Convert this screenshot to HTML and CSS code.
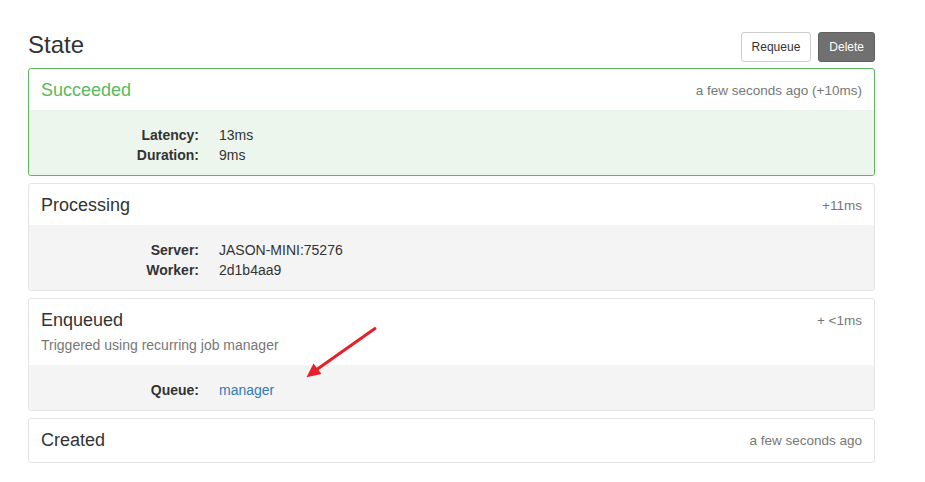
FILE: index.html
```html
<!DOCTYPE html>
<html>
<head>
<meta charset="utf-8">
<link rel="stylesheet" href="styles.css">
</head>
<body>
<div class="page">
  <div class="header-row">
    <h1 class="page-title">State</h1>
    <div class="actions">
      <button class="btn btn-default">Requeue</button>
      <button class="btn btn-death">Delete</button>
    </div>
  </div>

  <div class="state-card state-card-succeeded">
    <div class="state-card-title">
      <span class="title-text">Succeeded</span>
      <span class="state-time">a few seconds ago (+10ms)</span>
    </div>
    <div class="state-card-body">
      <dl class="dl-horizontal">
        <dt>Latency:</dt><dd>13ms</dd>
        <dt>Duration:</dt><dd>9ms</dd>
      </dl>
    </div>
  </div>

  <div class="state-card">
    <div class="state-card-title">
      <span class="title-text">Processing</span>
      <span class="state-time">+11ms</span>
    </div>
    <div class="state-card-body">
      <dl class="dl-horizontal">
        <dt>Server:</dt><dd>JASON-MINI:75276</dd>
        <dt>Worker:</dt><dd>2d1b4aa9</dd>
      </dl>
    </div>
  </div>

  <div class="state-card">
    <div class="state-card-title">
      <span class="title-text">Enqueued</span>
      <span class="state-time">+ &lt;1ms</span>
    </div>
    <p class="state-card-text">Triggered using recurring job manager</p>
    <div class="state-card-body">
      <dl class="dl-horizontal">
        <dt>Queue:</dt><dd><a class="queue-link" href="#">manager</a></dd>
      </dl>
    </div>
  </div>

  <div class="state-card">
    <div class="state-card-title">
      <span class="title-text">Created</span>
      <span class="state-time">a few seconds ago</span>
    </div>
  </div>

  <svg class="annotation-arrow" width="925" height="482" viewBox="0 0 925 482">
    <line x1="375" y1="328.5" x2="315" y2="370.8" stroke="#e8202a" stroke-width="3" stroke-linecap="round"/>
    <polygon points="306.5,377.3 313.5,363.5 321.5,374" fill="#e8202a"/>
  </svg>
</div>
</body>
</html>
```

FILE: styles.css
```css
html, body {
  margin: 0;
  padding: 0;
  background: #ffffff;
}

body {
  font-family: "Liberation Sans", Arial, Helvetica, sans-serif;
  font-size: 14px;
  line-height: 1.42857;
  color: #333333;
}

.page {
  position: relative;
  width: 847px;
  padding: 31px 0 20px 28px;
}

.header-row {
  display: flex;
  justify-content: space-between;
  align-items: flex-start;
  height: 31px;
  margin-bottom: 6px;
}

.page-title {
  margin: 1px 0 0 0;
  font-size: 24px;
  font-weight: 400;
  line-height: 1.1;
  color: #333333;
}

.actions {
  display: flex;
  gap: 7px;
  margin-top: 1px;
}

.btn {
  font-family: "Liberation Sans", Arial, Helvetica, sans-serif;
  font-size: 12px;
  line-height: 1.5;
  padding: 5px 10px;
  height: 30px;
  border-radius: 3px;
  border: 1px solid #cccccc;
  background: #ffffff;
  color: #333333;
  cursor: pointer;
}

.btn-death {
  background: #707070;
  border-color: #606060;
  color: #ffffff;
}

.state-card {
  display: block;
  margin-bottom: 7px;
  padding: 12px;
  background-color: #ffffff;
  border: 1px solid #e5e5e5;
  border-radius: 3px;
}

.state-card-succeeded {
  border-color: #5cb85c;
}

.state-card-title {
  display: flex;
  justify-content: space-between;
  align-items: baseline;
  height: 19px;
  line-height: 19px;
}

.title-text {
  font-size: 18px;
  line-height: 19px;
  font-weight: 400;
  color: #333333;
}

.state-card-succeeded .title-text {
  color: #5cb85c;
}

.state-time {
  position: relative;
  top: -1px;
  font-size: 13.5px;
  line-height: 19px;
  color: #777777;
}

.state-card-text {
  margin: 6px 0 -1px 0;
  color: #777777;
}

.state-card-body {
  padding: 10px 10px 9px 10px;
  margin: 10px -12px -12px -12px;
  border-bottom-left-radius: 3px;
  border-bottom-right-radius: 3px;
  background-color: #f4f4f4;
}

.state-card-succeeded .state-card-body {
  background-color: #edf6ec;
}

.dl-horizontal {
  display: grid;
  grid-template-columns: 160px 1fr;
  column-gap: 20px;
  margin: 6px 0 0 0;
}

.dl-horizontal dt {
  font-weight: 700;
  text-align: right;
}

.dl-horizontal dd {
  margin: 0;
}

.queue-link {
  color: #337ab7;
  text-decoration: none;
}

.annotation-arrow {
  position: absolute;
  left: 0;
  top: 0;
  pointer-events: none;
}
```
